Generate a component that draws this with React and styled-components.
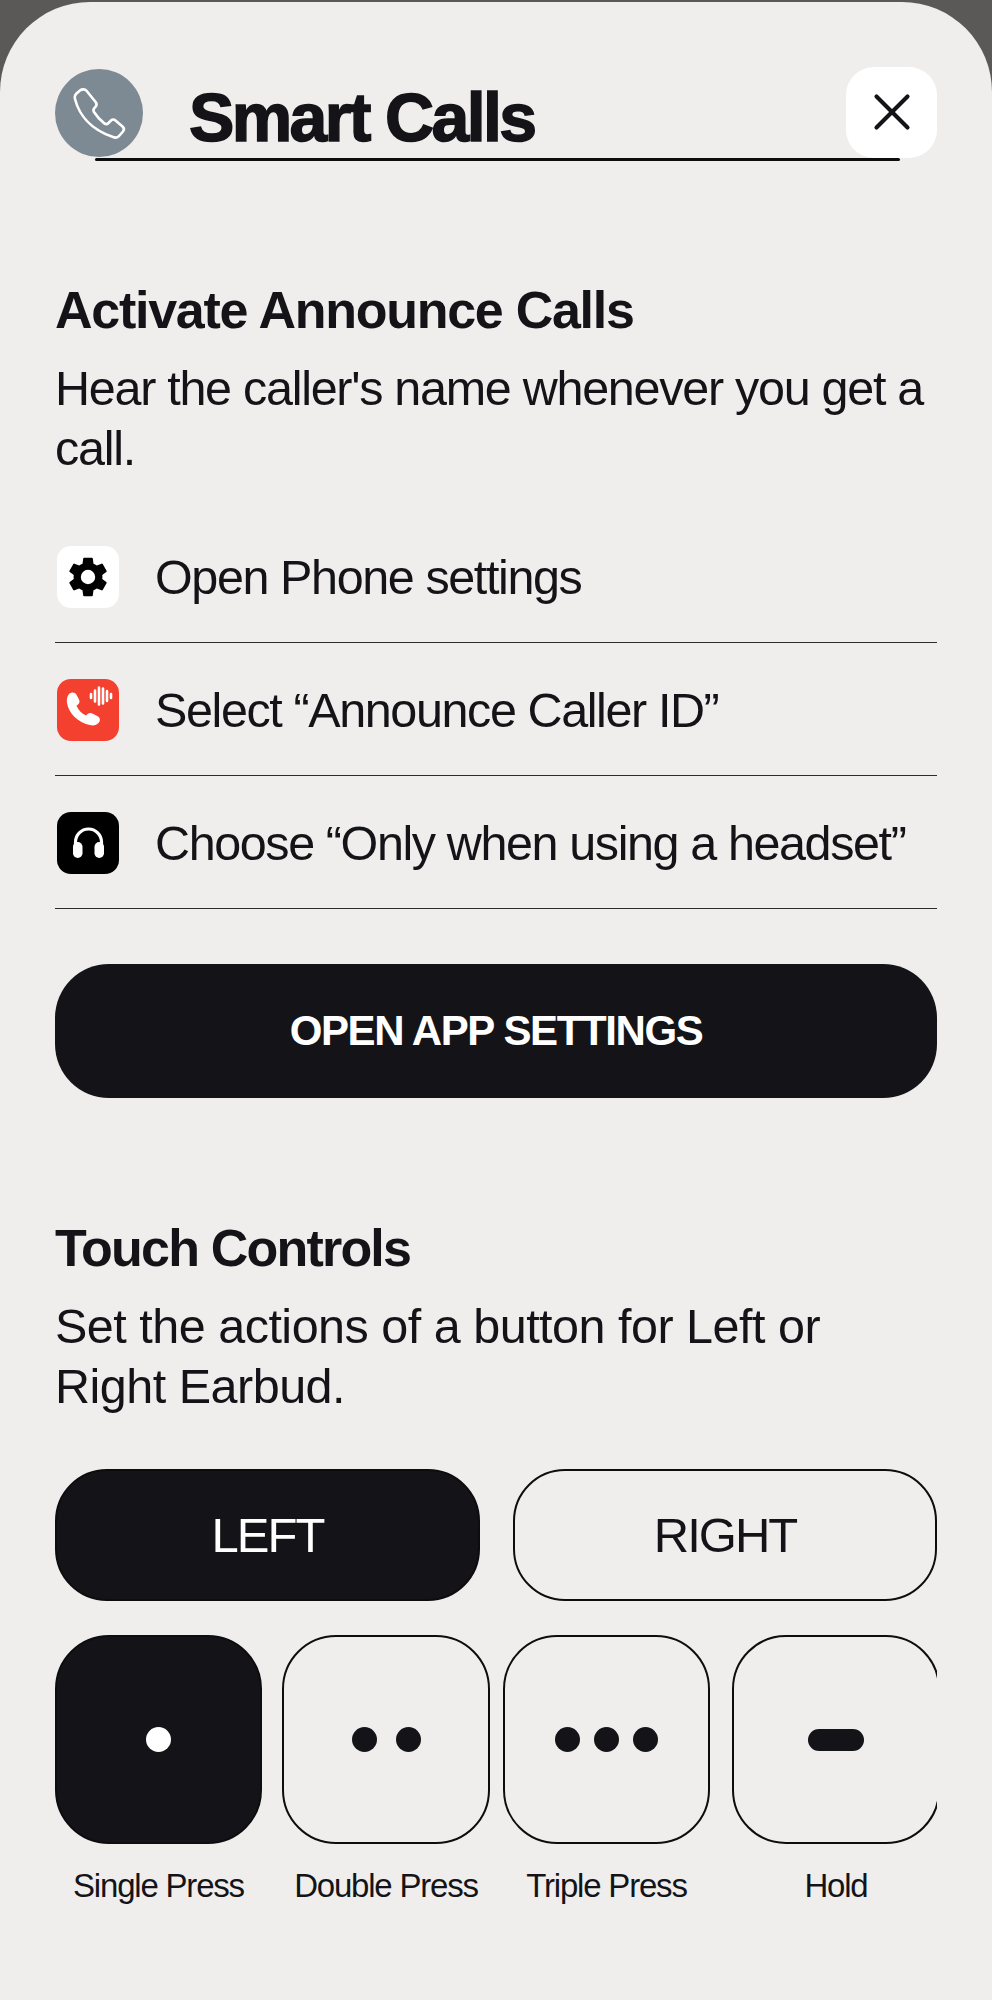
import React from 'react';
import styled, { createGlobalStyle } from 'styled-components';
import { X } from 'lucide-react';

const Global = createGlobalStyle`
  html, body { margin: 0; padding: 0; background: #5a5958; }
  body { font-family: "Liberation Sans", Arial, sans-serif; color: #141418; }
`;

const Sheet = styled.div`
  width: 992px; height: 1998px; margin-top: 2px; box-sizing: border-box;
  background: #efeeed; border-radius: 90px 90px 0 0;
  padding: 64px 55px 0; overflow: hidden;
`;
const Header = styled.header`
  position: relative; height: 95px; display: flex; align-items: center;
`;
const HeaderRule = styled.div`
  position: absolute; left: 40px; right: 37px; bottom: 0; height: 3px; background: #0d0d0f; border-radius: 2px;
`;
const CallBadge = styled.div`
  position: relative; width: 88px; height: 88px; border-radius: 50%; background: #7e8a93;
  flex: none; margin-top: -2px;
`;
const Title = styled.h1`
  position: relative; margin: 0 0 0 46px; flex: 1; font-size: 68px; line-height: 70px; font-weight: 700;
  letter-spacing: -2.6px; -webkit-text-stroke: 1.5px #141418; color: #141418; padding-top: 6px;
`;
const CloseButton = styled.button`
  position: relative; width: 91px; height: 91px; border: 0; padding: 0; border-radius: 28px; background: #fff; color: #141418;
  display: flex; align-items: center; justify-content: center; margin-top: -3px;
`;
const Section = styled.section`
  margin-top: ${p => p.$top}px;
`;
const Heading = styled.h2`
  margin: 0; font-size: 52px; line-height: 60px; font-weight: 700; letter-spacing: ${p => p.$tracking}px; color: #141418;
`;
const Para = styled.p`
  margin: 18px 0 0; max-width: ${p => p.$max}px; font-size: 48.5px; line-height: 60px; font-weight: 400;
  letter-spacing: ${p => p.$tracking}px;
`;
const Steps = styled.ul`
  list-style: none; margin: 32px 0 0; padding: 0;
`;
const Step = styled.li`
  height: 133px; box-sizing: border-box; padding-top: 1px; border-bottom: 1px solid #2c2c2e;
  display: flex; align-items: center; gap: 36px; font-size: 48.5px; letter-spacing: -1.4px; white-space: nowrap;
`;
const AppIcon = styled.span`
  width: 62px; height: 62px; margin-left: 2px; border-radius: 14px; flex: none; background: ${p => p.$bg};
  display: flex; align-items: center; justify-content: center;
`;
const PrimaryButton = styled.button`
  display: block; width: 100%; height: 134px; margin-top: 55px; border: 0; border-radius: 54px;
  background: #141418; color: #fff; font: 700 42px "Liberation Sans", sans-serif; letter-spacing: -1.4px;
`;
const ToggleRow = styled.div`
  display: grid; grid-template-columns: 425px 424px; justify-content: space-between; margin-top: 53px;
`;
const Toggle = styled.button`
  height: 132px; border-radius: 52px; box-sizing: border-box; border: 2px solid #0d0d0f;
  background: ${p => (p.$on ? '#141418' : 'transparent')}; color: ${p => (p.$on ? '#fff' : '#141418')};
  font: 400 49px "Liberation Sans", sans-serif; letter-spacing: -2px;
`;
const PressRow = styled.div`
  display: flex; margin-top: 34px; overflow: hidden;
`;
const PressItem = styled.div`
  flex: none; width: ${p => p.$w}px; margin-left: ${p => p.$gap}px; display: flex; flex-direction: column; align-items: center;
`;
const PressTile = styled.div`
  width: 100%; height: 209px; box-sizing: border-box; border: 2px solid #0d0d0f; border-radius: 54px;
  background: ${p => (p.$on ? '#141418' : 'transparent')};
  display: flex; align-items: center; justify-content: center; gap: ${p => p.$dotGap}px;
`;
const Dot = styled.span`
  width: 25px; height: 25px; border-radius: 50%; background: ${p => (p.$on ? '#fff' : '#141418')};
`;
const Dash = styled.span`
  width: 56px; height: 22px; border-radius: 11px; background: #141418;
`;
const PressLabel = styled.div`
  margin-top: 22px; font-size: 33px; line-height: 40px; letter-spacing: -1.2px; white-space: nowrap;
`;

const PhoneOutline = () => (
  <svg width="88" height="88" viewBox="0 0 88 88" fill="none" stroke="#fff" strokeWidth="2.6" strokeLinejoin="round">
    <path d="M25 21.500 L21.500 24.500 C19.500 26.500 19.500 29 20.300 31 C24 45 35 60 58 68 C60.500 69 63 68.500 64.500 66.500 L68 62.500 C69.300 60.800 69 58.800 67.500 57.500 L60.500 51.500 C59 50.200 57.300 50.300 56 51.500 L53.500 54 C52.300 55.300 50.600 55.400 49.300 54.400 C45 51 41.500 47 39 43 C38.200 41.600 38.300 40 39.500 38.800 L40.500 37.800 C41.700 36.500 41.800 34.800 40.800 33.300 L31.500 21.800 C30 20 27 19.800 25 21.500 Z" />
  </svg>
);
const GearIcon = () => (
  <svg width="48" height="48" viewBox="0 0 24 24" fill="#000">
    <path fillRule="evenodd" d="M19.140 12.940c.04-.3.06-.61.06-.94s-.02-.64-.07-.94l2.030-1.580a.49.49 0 0 0 .12-.61l-1.920-3.320a.49.49 0 0 0-.59-.22l-2.390.96a7 7 0 0 0-1.620-.94l-.36-2.540a.48.48 0 0 0-.48-.41h-3.840a.48.48 0 0 0-.47.41l-.36 2.540c-.59.24-1.130.57-1.620.94l-2.390-.96a.48.48 0 0 0-.59.22L2.740 8.870a.48.48 0 0 0 .12.61l2.030 1.580c-.05.3-.09.63-.09.94s.02.64.07.94l-2.030 1.580a.49.49 0 0 0-.12.61l1.920 3.320c.12.22.37.29.59.22l2.390-.96c.5.38 1.030.7 1.620.94l.36 2.540c.05.24.24.41.48.41h3.840c.24 0 .44-.17.47-.41l.36-2.540c.59-.24 1.130-.56 1.620-.94l2.390.96c.22.08.47 0 .59-.22l1.920-3.320a.48.48 0 0 0-.12-.61zM12 15.600A3.600 3.600 0 1 1 12 8.400a3.600 3.600 0 0 1 0 7.200z" />
  </svg>
);
const CallIdIcon = () => (
  <svg width="62" height="62" viewBox="0 0 62 62" fill="none">
    <path fill="#fff" d="M12 15c2.500-2.300 6-2 7.500 .8l2.500 4.700c1 1.900.5 3.700-1 5l-1.500 1.300c1.800 4.200 5 7.600 9.500 9.800l1.500-1.500c1.300-1.300 3.200-1.600 4.900-.7l5.200 2.900c2.600 1.400 3 4.300 1.300 6.300-2 2.400-5 3.200-8 2.700C20 43.500 11.500 33.500 10 24c-.5-3.500 .2-6.800 2-9z" />
    <g stroke="#fff" strokeWidth="2.600" strokeLinecap="round">
      <path d="M34 15v4M38 11.500v11M42 8.500v17M46 9.500v15M50 12v10M54 15v4" />
    </g>
  </svg>
);
const HeadsetIcon = () => (
  <svg width="62" height="62" viewBox="0 0 62 62" fill="none">
    <path d="M18.500 36v-6a13 13 0 0 1 26 0v6" stroke="#fff" strokeWidth="3.200" />
    <rect x="16" y="30" width="9.500" height="16" rx="4.700" fill="#fff" />
    <rect x="37.500" y="30" width="9.500" height="16" rx="4.700" fill="#fff" />
  </svg>
);

export default function App() {
  return (
    <>
      <Global />
      <Sheet>
        <Header>
          <HeaderRule />
          <CallBadge><PhoneOutline /></CallBadge>
          <Title>Smart Calls</Title>
          <CloseButton aria-label="Close"><X size={62} strokeWidth={1.6} /></CloseButton>
        </Header>

        <Section $top={119}>
          <Heading $tracking={-1.27}>Activate Announce Calls</Heading>
          <Para $tracking={-1.28}>Hear the caller's name whenever you get a call.</Para>
          <Steps>
            <Step><AppIcon $bg="#fff"><GearIcon /></AppIcon>Open Phone settings</Step>
            <Step><AppIcon $bg="#f4402f"><CallIdIcon /></AppIcon>Select “Announce Caller ID”</Step>
            <Step><AppIcon $bg="#000"><HeadsetIcon /></AppIcon>Choose “Only when using a headset”</Step>
          </Steps>
          <PrimaryButton>OPEN APP SETTINGS</PrimaryButton>
        </Section>

        <Section $top={120}>
          <Heading $tracking={-1.8}>Touch Controls</Heading>
          <Para $tracking={-0.5} $max={800}>Set the actions of a button for Left or Right Earbud.</Para>
          <ToggleRow>
            <Toggle $on>LEFT</Toggle>
            <Toggle>RIGHT</Toggle>
          </ToggleRow>
          <PressRow>
            <PressItem $w={207} $gap={0}>
              <PressTile $on><Dot $on /></PressTile>
              <PressLabel>Single Press</PressLabel>
            </PressItem>
            <PressItem $w={208} $gap={20}>
              <PressTile $dotGap={19}><Dot /><Dot /></PressTile>
              <PressLabel>Double Press</PressLabel>
            </PressItem>
            <PressItem $w={207} $gap={13}>
              <PressTile $dotGap={14}><Dot /><Dot /><Dot /></PressTile>
              <PressLabel>Triple Press</PressLabel>
            </PressItem>
            <PressItem $w={208} $gap={22}>
              <PressTile><Dash /></PressTile>
              <PressLabel>Hold</PressLabel>
            </PressItem>
          </PressRow>
        </Section>
      </Sheet>
    </>
  );
}
